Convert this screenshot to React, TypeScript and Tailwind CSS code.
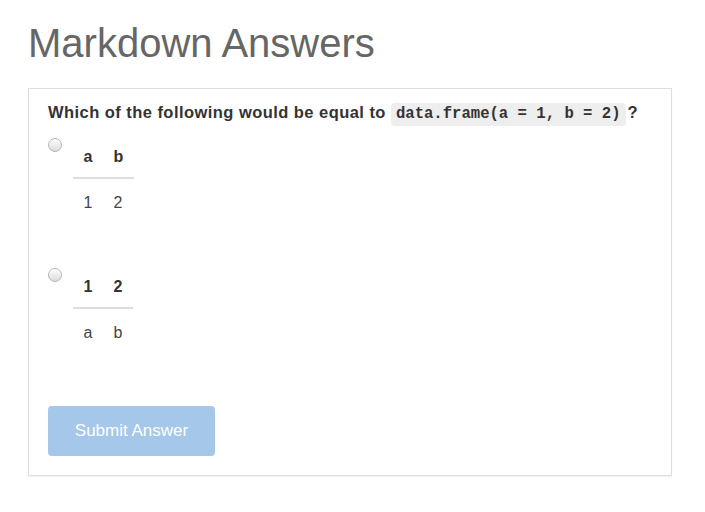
import React from "react";

const font = { fontFamily: '"Liberation Sans", Arial, sans-serif' };

function Radio() {
  return (
    <div className="w-[14px] h-[14px] shrink-0 rounded-full border border-[#b4b4b4] bg-gradient-to-b from-[#fefefe] to-[#dcdcdc] shadow-[inset_0_1px_1px_rgba(255,255,255,0.8)]" />
  );
}

function MiniTable({ head, body }: { head: [string, string]; body: [string, string] }) {
  return (
    <table className="mt-[2px] border-collapse text-[16px] text-[#333]">
      <thead>
        <tr className="border-b-2 border-[#dddddd]">
          {head.map((h, i) => (
            <th key={i} className="px-[10.5px] pt-[6px] pb-[10px] leading-[21px] font-bold text-left">
              {h}
            </th>
          ))}
        </tr>
      </thead>
      <tbody>
        <tr>
          {body.map((b, i) => (
            <td key={i} className="px-[10.5px] pt-[13px] pb-[8px] leading-[21px] text-left text-[#444]">
              {b}
            </td>
          ))}
        </tr>
      </tbody>
    </table>
  );
}

function Option({ head, body }: { head: [string, string]; body: [string, string] }) {
  return (
    <div className="flex h-[130px] items-start">
      <Radio />
      <div className="ml-[11px]">
        <MiniTable head={head} body={body} />
      </div>
    </div>
  );
}

export default function App() {
  return (
    <div className="min-h-[512px] w-[705px] bg-white px-[28px] pt-[22px]" style={font}>
      <h1 className="text-[40px] leading-[43px] font-light text-[#666]">
        Markdown Answers
      </h1>
      <div className="mt-[23px] w-[644px] border border-[#dddddd] shadow-[0_1px_1px_rgba(0,0,0,0.05)] px-[19px] pt-[11px] pb-[19px]">
        <div className="h-[24px] text-[16.5px] tracking-[0.45px] leading-[24px] font-bold text-[#333]">
          Which of the following would be equal to{" "}
          <code
            className="inline-block rounded-[4px] bg-[#eeeeee] px-[5px] leading-[23px] text-[15.6px] font-bold tracking-normal text-[#333]"
            style={{ fontFamily: '"Liberation Mono", "Courier New", monospace' }}
          >
            data.frame(a = 1, b = 2)
          </code>
          <span className="ml-[2px]">?</span>
        </div>
        <div className="mt-[14px]">
          <Option head={["a", "b"]} body={["1", "2"]} />
          <Option head={["1", "2"]} body={["a", "b"]} />
        </div>
        <button className="mt-[8px] h-[50px] w-[167px] rounded-[4px] bg-[#a5c7e9] text-[17px] text-white">
          Submit Answer
        </button>
      </div>
    </div>
  );
}
